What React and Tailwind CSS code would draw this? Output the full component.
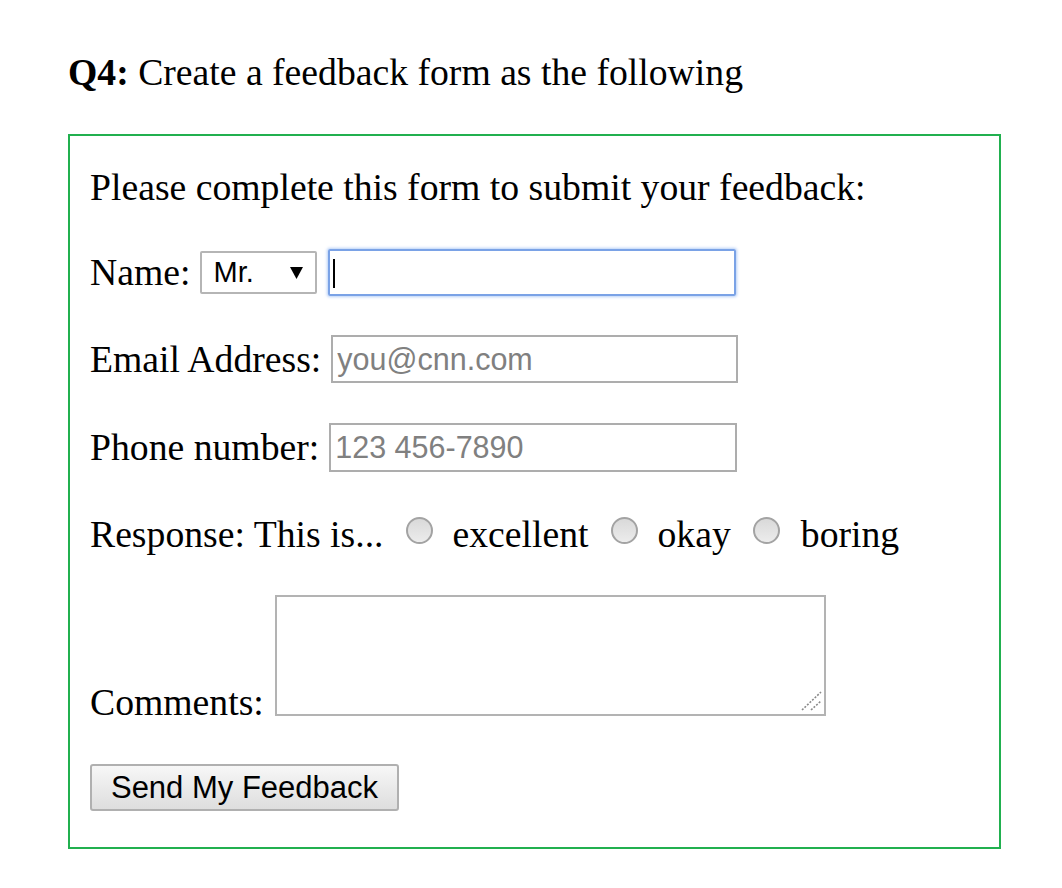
import React from 'react';

function Radio({ name, value }) {
  return (
    <input
      type="radio"
      name={name}
      value={value}
      className="mb-[8px] ml-[22px] h-[27px] w-[27px] shrink-0 appearance-none rounded-full border-2 border-[#a3a3a3] bg-gradient-to-b from-[#d9d9d9] to-[#ececec]"
    />
  );
}

export default function App() {
  return (
    <div className="min-h-screen bg-white pl-[68px] pt-[51px] font-['Liberation_Serif',serif] text-black">
      <p className="text-[37.7px] leading-[42px]">
        <b>Q4:</b> Create a feedback form as the following
      </p>

      <form
        onSubmit={(e) => e.preventDefault()}
        className="mt-[41px] w-[933px] border-2 border-[#21b04f] pb-[36px] pl-[20px] pt-[30px] text-[37.7px] leading-[42px]"
      >
        <p>Please complete this form to submit your feedback:</p>

        <div className="mt-[39px] flex h-[50px] items-center">
          <span>Name:</span>
          <div className="relative ml-[10px]">
            <select className="block h-[43px] w-[117px] appearance-none rounded-[2px] border-2 border-[#b5b5b5] bg-white pl-[11px] font-['Liberation_Sans',sans-serif] text-[29px] leading-none text-black outline-none">
              <option>Mr.</option>
              <option>Mrs.</option>
              <option>Ms.</option>
            </select>
            <svg
              className="pointer-events-none absolute right-[14px] top-[16px]"
              width="13"
              height="12"
              viewBox="0 0 13 12"
            >
              <polygon points="0,0 13,0 6.5,12" fill="#000" />
            </svg>
          </div>
          <div className="relative ml-[11px] h-[47px] w-[408px] rounded-[2px] border-2 border-[#7aa2e6] shadow-[0_0_3px_1px_rgba(120,165,240,0.55)]">
            <input
              type="text"
              className="h-full w-full bg-transparent px-[5px] font-['Liberation_Sans',sans-serif] text-[30px] outline-none"
            />
            <div className="absolute left-[3px] top-[8px] h-[29px] w-[2px] bg-black" />
          </div>
        </div>

        <div className="mt-[37px] flex h-[50px] items-center">
          <span>Email Address:</span>
          <input
            type="email"
            placeholder="you@cnn.com"
            className="ml-[10px] h-[48px] w-[407px] border-2 border-[#adadad] px-[4px] font-['Liberation_Sans',sans-serif] text-[30.5px] outline-none placeholder:text-[#808080]"
          />
        </div>

        <div className="mt-[38px] flex h-[50px] items-center">
          <span>Phone number:</span>
          <input
            type="tel"
            placeholder="123 456-7890"
            className="ml-[10px] h-[49px] w-[408px] border-2 border-[#adadad] px-[4px] font-['Liberation_Sans',sans-serif] text-[30.5px] outline-none placeholder:text-[#808080]"
          />
        </div>

        <div className="mt-[41px] flex h-[42px] items-center">
          <span>Response: This is...</span>
          <Radio name="response" value="excellent" />
          <span className="ml-[20px]">excellent</span>
          <Radio name="response" value="okay" />
          <span className="ml-[20px]">okay</span>
          <Radio name="response" value="boring" />
          <span className="ml-[21px]">boring</span>
        </div>

        <div className="mt-[40px] flex items-end">
          <span>Comments:</span>
          <div className="relative mb-[7px] ml-[11px]">
            <textarea className="block h-[121px] w-[551px] resize-none border-2 border-[#b3b3b3] p-[4px] font-['Liberation_Sans',sans-serif] text-[30px] outline-none" />
            <svg
              className="pointer-events-none absolute bottom-[5px] right-[4px]"
              width="21"
              height="20"
              viewBox="0 0 21 20"
            >
              <line x1="1" y1="19" x2="20" y2="1" stroke="#8a8a8a" strokeWidth="1.6" strokeDasharray="2 1.5" />
              <line x1="10" y1="19" x2="20" y2="10" stroke="#8a8a8a" strokeWidth="1.6" strokeDasharray="2 1.5" />
            </svg>
          </div>
        </div>

        <button
          type="submit"
          className="mt-[41px] block h-[47px] w-[309px] rounded-[3px] border-2 border-[#b0b0b0] bg-gradient-to-b from-[#f7f7f7] to-[#dedede] font-['Liberation_Sans',sans-serif] text-[31px] leading-none text-black"
        >
          Send My Feedback
        </button>
      </form>
    </div>
  );
}
